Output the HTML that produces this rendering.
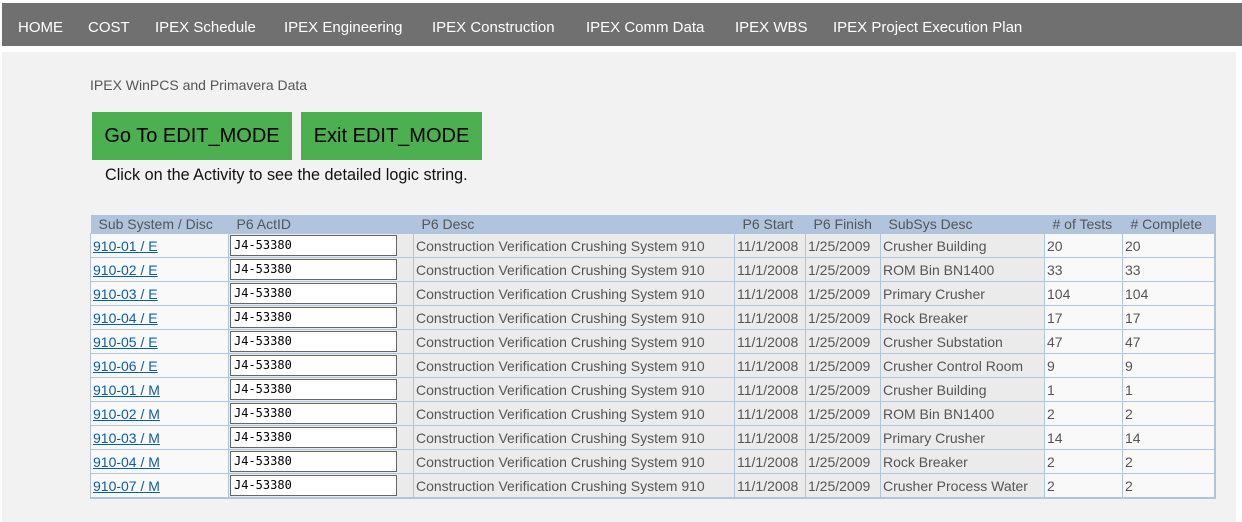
<!DOCTYPE html>
<html><head><style>
body{margin:0;background:#fff;font-family:"Liberation Sans",Arial,sans-serif;width:1242px;height:522px;overflow:hidden;position:relative}
.nav{position:absolute;left:2px;top:3px;width:1240px;height:43px;background:#707070}
.nav span{position:absolute;top:16px;color:#fff;font-size:15px;line-height:17px}
.panel{position:absolute;left:2px;top:52px;width:1234px;height:470px;background:#f2f2f2}
.title{position:absolute;left:90px;top:77px;font-size:14px;color:#555}
.btn{position:absolute;top:112px;height:48px;background:#4caf50;color:#000;font-size:20px;line-height:48px;text-align:center}
.hint{position:absolute;left:105px;top:166px;font-size:16.2px;color:#111}
table{position:absolute;left:90px;top:215px;border-collapse:collapse;table-layout:fixed;font-size:14px;color:#555;border-bottom:2px solid #b0c4de;border-right:2px solid #b0c4de}
th{background:#b0c4de;font-weight:normal;height:18px;padding:0;text-align:left;padding-left:8px;line-height:18px}
td{border:1px solid #b0c4de;height:23px;padding:0 0 0 2px;white-space:nowrap;overflow:hidden;background:#ebebeb}
td.w{background:#f9f9f9}
td a{color:#0b5da8;text-decoration:underline}
.in{display:block;margin-left:-1px;width:162px;height:19px;border:1px solid #666;background:#fff;color:#000;line-height:19px;padding-left:3px;font-family:"DejaVu Sans Mono","Liberation Mono",monospace;font-size:12px}
</style></head><body>
<div class="nav">
<span style="left:16px">HOME</span><span style="left:86px">COST</span><span style="left:153px">IPEX Schedule</span><span style="left:282px">IPEX Engineering</span><span style="left:430px">IPEX Construction</span><span style="left:584px">IPEX Comm Data</span><span style="left:733px">IPEX WBS</span><span style="left:831px">IPEX Project Execution Plan</span>
</div>
<div class="panel"></div>
<div class="title">IPEX WinPCS and Primavera Data</div>
<div class="btn" style="left:92px;width:200px">Go To EDIT_MODE</div>
<div class="btn" style="left:301px;width:181px">Exit EDIT_MODE</div>
<div class="hint">Click on the Activity to see the detailed logic string.</div>
<table>
<colgroup><col style="width:138px"><col style="width:185px"><col style="width:321px"><col style="width:71px"><col style="width:75px"><col style="width:164px"><col style="width:78px"><col style="width:92px"></colgroup>
<tr><th>Sub System / Disc</th><th>P6 ActID</th><th>P6 Desc</th><th>P6 Start</th><th>P6 Finish</th><th>SubSys Desc</th><th># of Tests</th><th># Complete</th></tr>
<tr><td class="w"><a>910-01 / E</a></td><td><span class="in">J4-53380</span></td><td>Construction Verification Crushing System 910</td><td>11/1/2008</td><td>1/25/2009</td><td>Crusher Building</td><td class="w">20</td><td class="w">20</td></tr>
<tr><td class="w"><a>910-02 / E</a></td><td><span class="in">J4-53380</span></td><td>Construction Verification Crushing System 910</td><td>11/1/2008</td><td>1/25/2009</td><td>ROM Bin BN1400</td><td class="w">33</td><td class="w">33</td></tr>
<tr><td class="w"><a>910-03 / E</a></td><td><span class="in">J4-53380</span></td><td>Construction Verification Crushing System 910</td><td>11/1/2008</td><td>1/25/2009</td><td>Primary Crusher</td><td class="w">104</td><td class="w">104</td></tr>
<tr><td class="w"><a>910-04 / E</a></td><td><span class="in">J4-53380</span></td><td>Construction Verification Crushing System 910</td><td>11/1/2008</td><td>1/25/2009</td><td>Rock Breaker</td><td class="w">17</td><td class="w">17</td></tr>
<tr><td class="w"><a>910-05 / E</a></td><td><span class="in">J4-53380</span></td><td>Construction Verification Crushing System 910</td><td>11/1/2008</td><td>1/25/2009</td><td>Crusher Substation</td><td class="w">47</td><td class="w">47</td></tr>
<tr><td class="w"><a>910-06 / E</a></td><td><span class="in">J4-53380</span></td><td>Construction Verification Crushing System 910</td><td>11/1/2008</td><td>1/25/2009</td><td>Crusher Control Room</td><td class="w">9</td><td class="w">9</td></tr>
<tr><td class="w"><a>910-01 / M</a></td><td><span class="in">J4-53380</span></td><td>Construction Verification Crushing System 910</td><td>11/1/2008</td><td>1/25/2009</td><td>Crusher Building</td><td class="w">1</td><td class="w">1</td></tr>
<tr><td class="w"><a>910-02 / M</a></td><td><span class="in">J4-53380</span></td><td>Construction Verification Crushing System 910</td><td>11/1/2008</td><td>1/25/2009</td><td>ROM Bin BN1400</td><td class="w">2</td><td class="w">2</td></tr>
<tr><td class="w"><a>910-03 / M</a></td><td><span class="in">J4-53380</span></td><td>Construction Verification Crushing System 910</td><td>11/1/2008</td><td>1/25/2009</td><td>Primary Crusher</td><td class="w">14</td><td class="w">14</td></tr>
<tr><td class="w"><a>910-04 / M</a></td><td><span class="in">J4-53380</span></td><td>Construction Verification Crushing System 910</td><td>11/1/2008</td><td>1/25/2009</td><td>Rock Breaker</td><td class="w">2</td><td class="w">2</td></tr>
<tr><td class="w"><a>910-07 / M</a></td><td><span class="in">J4-53380</span></td><td>Construction Verification Crushing System 910</td><td>11/1/2008</td><td>1/25/2009</td><td>Crusher Process Water</td><td class="w">2</td><td class="w">2</td></tr>
</table>
</body></html>
